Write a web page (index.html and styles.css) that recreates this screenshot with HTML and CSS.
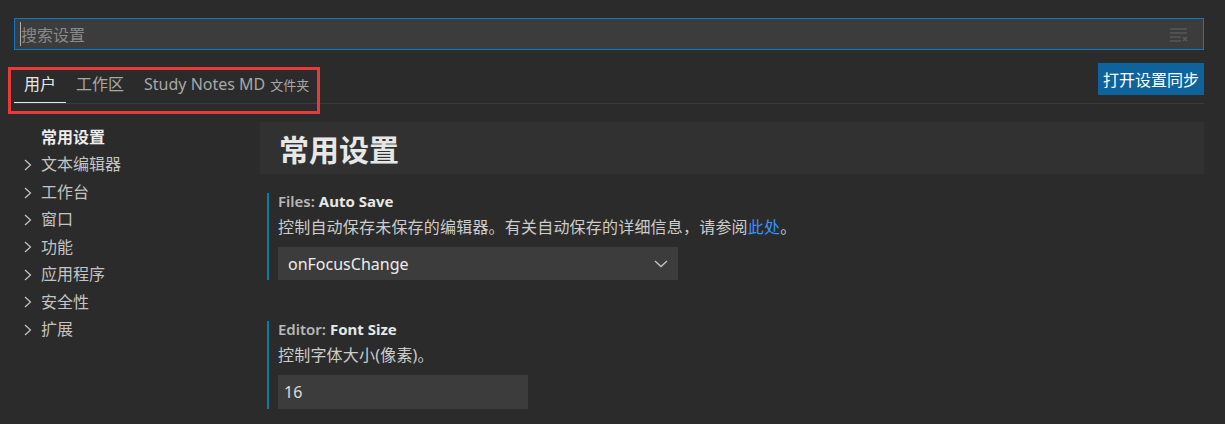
FILE: index.html
```html
<!DOCTYPE html>
<html lang="zh-CN">
<head>
<meta charset="utf-8">
<title>设置</title>
<link rel="stylesheet" href="styles.css">
</head>
<body>
<div class="header">
  <div class="search">
    <span class="caret"></span>
    <span class="placeholder">搜索设置</span>
    <svg class="clear" width="18" height="14" viewBox="0 0 18 14">
      <g stroke="#5a5a5a" stroke-width="1.4" fill="none">
        <line x1="0" y1="1" x2="17" y2="1"/>
        <line x1="0" y1="5" x2="17" y2="5"/>
        <line x1="0" y1="9" x2="11" y2="9"/>
        <line x1="0" y1="13" x2="11" y2="13"/>
        <line x1="13" y1="9" x2="17" y2="13"/>
        <line x1="17" y1="9" x2="13" y2="13"/>
      </g>
    </svg>
  </div>
  <div class="tabrow">
    <div class="tabs">
      <div class="tab active">用户</div>
      <div class="tab">工作区</div>
      <div class="tab">Study Notes MD<span class="tab-sub">文件夹</span></div>
    </div>
    <div class="sync-btn">打开设置同步</div>
  </div>
  <div class="highlight"></div>
</div>
<div class="content">
  <nav class="toc">
    <div class="toc-item current"><span class="chev"></span>常用设置</div>
    <div class="toc-item"><span class="chev"><svg width="8" height="12" viewBox="0 0 8 12"><path d="M1 1 L6.5 6 L1 11" stroke="#c5c5c5" stroke-width="1.2" fill="none"/></svg></span>文本编辑器</div>
    <div class="toc-item"><span class="chev"><svg width="8" height="12" viewBox="0 0 8 12"><path d="M1 1 L6.5 6 L1 11" stroke="#c5c5c5" stroke-width="1.2" fill="none"/></svg></span>工作台</div>
    <div class="toc-item"><span class="chev"><svg width="8" height="12" viewBox="0 0 8 12"><path d="M1 1 L6.5 6 L1 11" stroke="#c5c5c5" stroke-width="1.2" fill="none"/></svg></span>窗口</div>
    <div class="toc-item"><span class="chev"><svg width="8" height="12" viewBox="0 0 8 12"><path d="M1 1 L6.5 6 L1 11" stroke="#c5c5c5" stroke-width="1.2" fill="none"/></svg></span>功能</div>
    <div class="toc-item"><span class="chev"><svg width="8" height="12" viewBox="0 0 8 12"><path d="M1 1 L6.5 6 L1 11" stroke="#c5c5c5" stroke-width="1.2" fill="none"/></svg></span>应用程序</div>
    <div class="toc-item"><span class="chev"><svg width="8" height="12" viewBox="0 0 8 12"><path d="M1 1 L6.5 6 L1 11" stroke="#c5c5c5" stroke-width="1.2" fill="none"/></svg></span>安全性</div>
    <div class="toc-item"><span class="chev"><svg width="8" height="12" viewBox="0 0 8 12"><path d="M1 1 L6.5 6 L1 11" stroke="#c5c5c5" stroke-width="1.2" fill="none"/></svg></span>扩展</div>
  </nav>
  <main class="main">
    <div class="group-title">常用设置</div>
    <div class="setting">
      <div class="setting-title"><span class="cat">Files: </span><span class="label">Auto Save</span></div>
      <div class="setting-desc">控制自动保存未保存的编辑器。有关自动保存的详细信息，请参阅<span class="link">此处</span>。</div>
      <div class="select">
        <span>onFocusChange</span>
        <svg width="14" height="8" viewBox="0 0 14 8"><path d="M1 1 L7 6.5 L13 1" stroke="#c5c5c5" stroke-width="1.3" fill="none"/></svg>
      </div>
    </div>
    <div class="setting second">
      <div class="setting-title"><span class="cat">Editor: </span><span class="label">Font Size</span></div>
      <div class="setting-desc">控制字体大小(像素)。</div>
      <div class="input">16</div>
    </div>
  </main>
</div>
</body>
</html>
```

FILE: styles.css
```css
* { box-sizing: border-box; }
html, body {
  margin: 0;
  padding: 0;
  background: #2b2b2b;
  width: 1225px;
  height: 424px;
  overflow: hidden;
  font-family: "Noto Sans", "Noto Sans CJK SC", sans-serif;
  font-size: 16px;
  color: #cccccc;
}
.header {
  padding: 18px 21px 0 14px;
}
.search {
  height: 32px;
  border: 1px solid #0a7ad0;
  background: #3c3c3c;
  display: flex;
  align-items: center;
  padding: 0 15px 0 5px;
}
.caret {
  width: 1px;
  height: 24px;
  background: #aeaeae;
}
.placeholder {
  color: #8a8a8a;
  font-family: "Noto Sans CJK SC", sans-serif;
  font-size: 16px;
  flex: 1;
}
.clear { display: block; margin-top: 1px; }
.tabrow {
  margin-top: 13px;
  height: 41px;
  border-bottom: 1px solid #3b3b3b;
  display: flex;
  justify-content: space-between;
  align-items: flex-start;
}
.tabs { display: flex; }
.tab {
  height: 40px;
  padding: 10px 10px 0 10px;
  line-height: 22px;
  color: #a8a8a8;
  font-size: 16px;
  white-space: nowrap;
}
.tab.active {
  color: #e7e7e7;
  border-bottom: 1px solid #e7e7e7;
}
.tab-sub {
  font-size: 13px;
  margin-left: 5px;
  color: #a8a8a8;
}
.sync-btn {
  height: 32px;
  padding: 0 5px;
  background: #0e639c;
  color: #ffffff;
  line-height: 32px;
  font-size: 16px;
  font-family: "Noto Sans CJK SC", sans-serif;
}
.highlight {
  position: absolute;
  left: 8px;
  top: 67px;
  width: 312px;
  height: 47px;
  border: 3px solid #e83a3a;
  pointer-events: none;
}
.content {
  display: flex;
  padding: 0 21px 0 14px;
}
.toc {
  width: 246px;
  flex: none;
  padding-top: 20px;
}
.toc-item {
  height: 27.43px;
  line-height: 27.43px;
  display: flex;
  align-items: center;
  padding-left: 10px;
  color: #c4c4c4;
  font-size: 16px;
}
.toc-item.current {
  color: #ececec;
  font-weight: 700;
}
.chev {
  width: 17px;
  flex: none;
  display: flex;
  align-items: center;
}
.chev svg { display: block; }
.main {
  flex: 1;
  padding-top: 18px;
}
.group-title {
  height: 52px;
  background: #313131;
  display: flex;
  align-items: center;
  padding-left: 19px;
  font-size: 30px;
  font-weight: 700;
  color: #e7e7e7;
}
.setting {
  margin: 19px 0 0 7px;
  border-left: 2px solid #0e7ba3;
  padding-left: 9px;
}
.setting.second { margin-top: 41px; }
.setting-title {
  line-height: 17px;
  height: 17px;
  font-weight: 600;
  font-size: 15px;
}
.cat { color: #b8b8b8; }
.label { color: #e7e7e7; font-weight: 700; }
.setting-desc {
  margin-top: 7px;
  line-height: 20px;
  color: #cccccc;
  font-size: 16px;
  letter-spacing: 0.2px;
}
.link { color: #3794ff; }
.select {
  margin-top: 10px;
  width: 400px;
  height: 33px;
  background: #3c3c3c;
  display: flex;
  align-items: center;
  justify-content: space-between;
  padding: 0 10px;
  color: #ededed;
  font-size: 16px;
}
.input {
  margin-top: 10px;
  width: 250px;
  height: 34px;
  background: #3c3c3c;
  line-height: 34px;
  padding-left: 6px;
  color: #dcdcdc;
  font-size: 16px;
}
```
